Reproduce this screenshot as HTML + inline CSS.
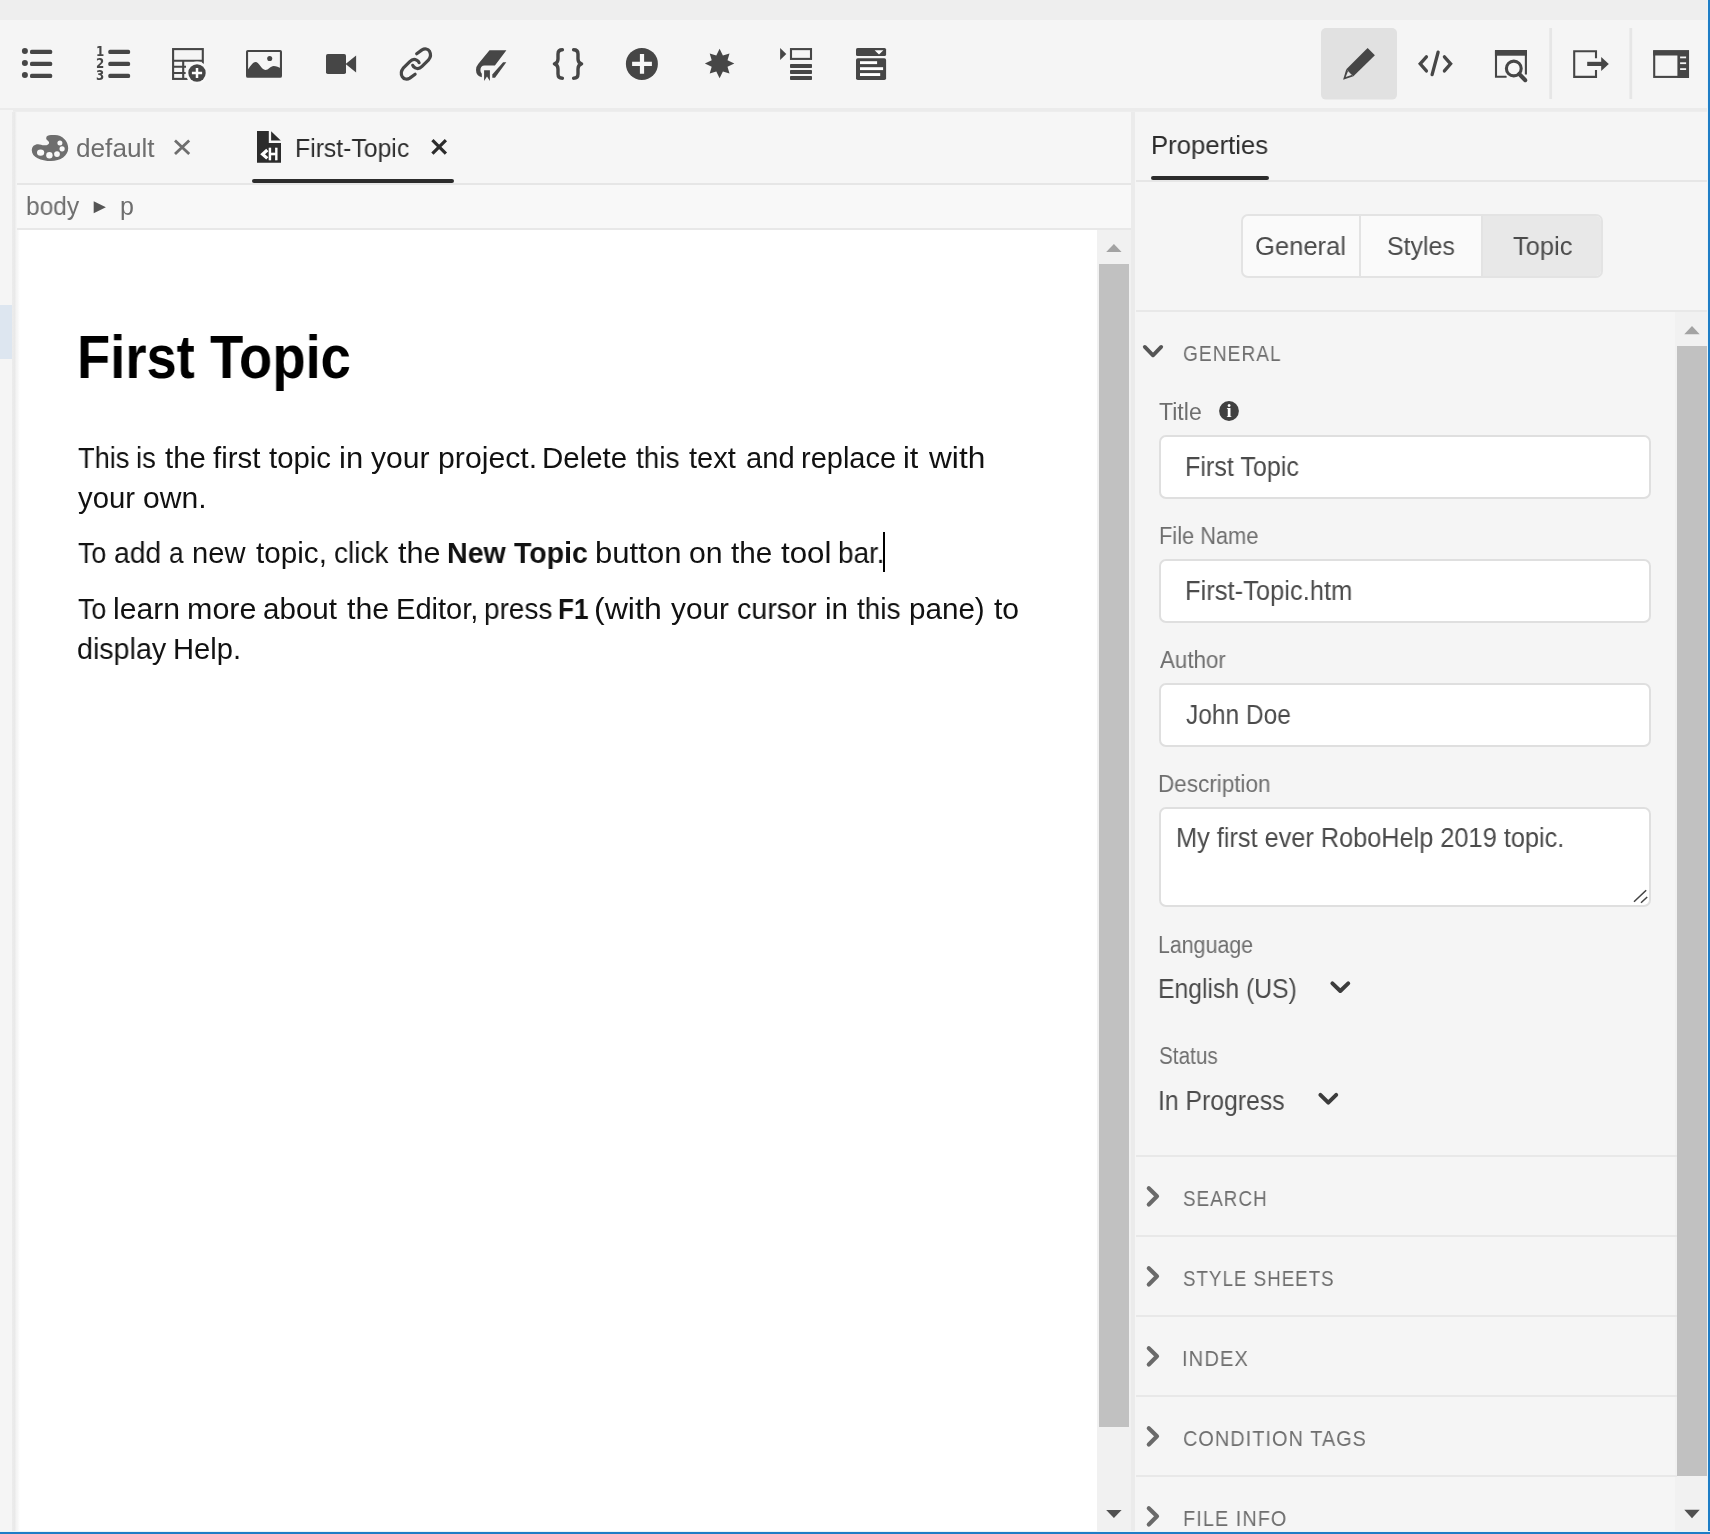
<!DOCTYPE html>
<html lang="en">
<head>
<meta charset="utf-8">
<title>First-Topic</title>
<style>
html,body{margin:0;padding:0;}
body{width:1710px;height:1534px;position:relative;overflow:hidden;background:#f5f5f5;font-family:"Liberation Sans",sans-serif;color:#2c2c2c;}
.abs{position:absolute;}
.t{position:absolute;white-space:pre;line-height:1;transform-origin:0 0;will-change:transform;}
svg{will-change:transform;}
#topstrip{left:0;top:0;width:1710px;height:20px;background:#eeeeee;}
#toolbar{left:0;top:20px;width:1710px;height:88px;background:#f5f5f5;}
#tbshadow{left:0;top:108px;width:1710px;height:7px;background:linear-gradient(#ebebeb,#ebebeb 40%,#f5f5f5);}
#gutter{left:0;top:110px;width:13px;height:1424px;background:#f5f5f5;}
#gutsel{left:0;top:305px;width:12px;height:54px;background:#dde6f0;}
#gutline{left:12px;top:112px;width:5px;height:1422px;background:linear-gradient(90deg,#ececec,#e9e9e9 50%,#f7f7f7);}
#edpanel{left:16px;top:112px;width:1116px;height:72px;background:#f6f6f6;}
#tabline{left:14px;top:183px;width:1118px;height:2px;background:#e6e6e6;}
#crumb{left:16px;top:185px;width:1116px;height:44px;background:#f8f8f8;}
#crumbline{left:14px;top:228px;width:1118px;height:2px;background:#e8e8e8;}
#page{left:17px;top:230px;width:1081px;height:1304px;background:linear-gradient(90deg,#f4f4f4,#fff 3px);}
#edscroll{left:1097px;top:230px;width:35px;height:1304px;background:#f1f1f1;}
#edthumb{left:1099px;top:264px;width:30px;height:1163px;background:#c1c1c1;}
#split{left:1131px;top:112px;width:4px;height:1422px;background:#ebebeb;}
#props{left:1135px;top:112px;width:572px;height:1422px;background:#f5f5f5;}
#pline1{left:1136px;top:180px;width:571px;height:2px;background:#e6e6e6;}
#pline2{left:1136px;top:310px;width:571px;height:2px;background:#e8e8e8;}
#ptrack{left:1675px;top:312px;width:32px;height:1222px;background:#f1f1f1;}
#pthumb{left:1677px;top:346px;width:30px;height:1130px;background:#c1c1c1;}
.ul{height:4px;border-radius:2px;background:#2c2c2c;}
#seg{left:1241px;top:214px;width:362px;height:64px;box-sizing:border-box;border:2px solid #e3e3e3;border-radius:7px;background:#fafafa;overflow:hidden;}
#segsel{left:1482px;top:216px;width:119px;height:60px;background:#e8e8e8;border-radius:0 5px 5px 0;}
.segdiv{top:216px;width:2px;height:60px;background:#e3e3e3;}
.inp{left:1159px;width:492px;box-sizing:border-box;border:2px solid #dfdfdf;border-radius:7px;background:#fff;}
.sep{left:1136px;width:541px;height:2px;background:#e8e8e8;}
#caret{left:883px;top:532px;width:2px;height:40px;background:#000;}
#blueR{left:1707px;top:0;width:3px;height:1534px;background:linear-gradient(90deg,#eaf4f7 1px,#1e7dc6 1px);}
#blueB{left:0;top:1531px;width:1710px;height:3px;background:linear-gradient(#eaf4f7 1px,#1e7dc6 1px);}
</style>
</head>
<body>

<div class="abs" id="topstrip"></div>
<div class="abs" id="toolbar"></div>
<div class="abs" id="tbshadow"></div>
<div class="abs" id="gutter"></div>
<div class="abs" id="gutsel"></div>
<div class="abs" id="edpanel"></div>
<div class="abs" id="crumb"></div>
<div class="abs" id="tabline"></div>
<div class="abs" id="crumbline"></div>
<div class="abs" id="page"></div>
<div class="abs" id="gutline"></div>
<div class="abs" id="edscroll"></div>
<div class="abs" id="edthumb"></div>
<div class="abs" id="props"></div>
<div class="abs" id="split"></div>
<div class="abs" id="pline1"></div>
<div class="abs" id="pline2"></div>
<div class="abs" id="ptrack"></div>
<div class="abs" id="pthumb"></div>
<div class="abs ul" style="left:252px;top:179px;width:202px"></div>
<div class="abs ul" style="left:1151px;top:176px;width:118px"></div>
<div class="abs" id="seg"></div>
<div class="abs" id="segsel"></div>
<div class="abs segdiv" style="left:1359px"></div>
<div class="abs segdiv" style="left:1481px"></div>
<div class="abs inp" style="top:435px;height:64px"></div>
<div class="abs inp" style="top:559px;height:64px"></div>
<div class="abs inp" style="top:683px;height:64px"></div>
<div class="abs inp" style="top:807px;height:100px"></div>
<div class="abs sep" style="top:1155px"></div>
<div class="abs sep" style="top:1235px"></div>
<div class="abs sep" style="top:1315px"></div>
<div class="abs sep" style="top:1395px"></div>
<div class="abs sep" style="top:1475px"></div>
<div class="abs" id="caret"></div>

<svg class="abs" style="left:0;top:0" width="1710" height="1534" viewBox="0 0 1710 1534" font-family="Liberation Sans, sans-serif">
<g fill="#464646" stroke="none">
<!-- bullet list -->
<circle cx="24.9" cy="51" r="3"/><circle cx="24.9" cy="63" r="3"/><circle cx="24.9" cy="75" r="3"/>
<rect x="30" y="49.8" width="22.2" height="4.3" rx="1.6"/><rect x="30" y="61.8" width="22.2" height="4.3" rx="1.6"/><rect x="30" y="73.8" width="22.2" height="4.3" rx="1.6"/>
<!-- numbered list -->
<text transform="translate(96.1 55.7) scale(.9 1)" font-size="13.2" style="font-family:'DejaVu Sans',sans-serif;font-weight:700">1</text>
<text transform="translate(96.1 67.7) scale(.9 1)" font-size="13.2" style="font-family:'DejaVu Sans',sans-serif;font-weight:700">2</text>
<text transform="translate(96.1 79.8) scale(.9 1)" font-size="13.2" style="font-family:'DejaVu Sans',sans-serif;font-weight:700">3</text>
<rect x="108.3" y="49.8" width="21.8" height="4.3" rx="1.6"/><rect x="108.3" y="61.8" width="21.8" height="4.3" rx="1.6"/><rect x="108.3" y="73.8" width="21.8" height="4.3" rx="1.6"/>
</g>
<!-- table + -->
<g fill="none" stroke="#464646" stroke-width="2.1">
<rect x="173.1" y="49.1" width="29.7" height="29.8"/>
<path d="M173 60.7H203 M183.2 60.7V79 M173 66.7H186 M173 73H186"/>
</g>
<circle cx="197" cy="73" r="11.4" fill="#f8f8f8"/>
<circle cx="197" cy="73" r="8.7" fill="#464646"/>
<path d="M191.9 73H202.1 M197 67.9V78.1" stroke="#fff" stroke-width="2.5" fill="none"/>
<!-- image -->
<rect x="247.05" y="50.95" width="33.9" height="25.8" rx=".8" fill="none" stroke="#464646" stroke-width="2.1"/>
<circle cx="269.7" cy="58.5" r="2.55" fill="#464646"/>
<path d="M247 70.8 C250 67 252.6 62.1 255.6 62.1 C259 62.1 261.6 70 265.4 70 C268.5 70 270.5 66 273.6 66 C276.5 66 278.5 67 281 68.3 V77 H247 Z" fill="#464646"/>
<!-- video -->
<rect x="326" y="54" width="20" height="20" rx="1.8" fill="#464646"/>
<path d="M345.6 64 L356.1 55.6 V72.4 Z" fill="#464646"/>
<!-- link -->
<g fill="none" stroke="#464646" stroke-width="3.2" stroke-linecap="round" stroke-linejoin="round">
<path d="M416.7 53.8 L422 49.9 C424.6 48.3 428 48.7 429.6 51.4 C431 54 430.5 57.4 428.6 59.8 L422 66.4 C420 68.4 417.2 68.9 415.2 67.9 C413.8 67.1 413 66.2 412.7 65.3"/>
<path transform="rotate(180 415.9 64)" d="M416.7 53.8 L422 49.9 C424.6 48.3 428 48.7 429.6 51.4 C431 54 430.5 57.4 428.6 59.8 L422 66.4 C420 68.4 417.2 68.9 415.2 67.9 C413.8 67.1 413 66.2 412.7 65.3"/>
</g>
<!-- glossary book -->
<path d="M489.5 50.2 H506.4 L494.9 65.6 H484.6 Q480.4 65.8 480.4 70.2 Q480.4 72.6 481.8 73.8 V77.2 Q476 75.6 476 69.9 Q476 66.6 478.4 63.8 Z" fill="#464646"/>
<path d="M484.1 70.2 H489.9 V80.9 L487 76.6 L484.1 80.9 Z" fill="#464646"/>
<path d="M492.3 77.7 H495 L506.3 62.2 H503.1 L492.3 74.5 Z" fill="#464646"/>
<!-- braces -->
<g fill="none" stroke="#464646" stroke-width="3.4" stroke-linecap="round" stroke-linejoin="round">
<path d="M562.4 49.8 Q558 49.8 558 54 V59 Q558 63 554.4 63.9 Q558 64.8 558 69 V74 Q558 78.2 562.4 78.2"/>
<path d="M573.6 49.8 Q578 49.8 578 54 V59 Q578 63 581.6 63.9 Q578 64.8 578 69 V74 Q578 78.2 573.6 78.2"/>
</g>
<!-- plus circle -->
<circle cx="641.9" cy="63.9" r="16" fill="#464646"/>
<path d="M632.1 63.9H651.9 M642 54V73.8" stroke="#f7f7f7" stroke-width="4.2" fill="none"/>
<!-- star -->
<path id="star8" fill="#464646" d="M719.6 48.8 L722.9 55.6 L729.5 53.6 L727.5 60.2 L734.3 63.5 L727.5 66.8 L729.5 73.4 L722.9 71.4 L719.6 78.2 L716.3 71.4 L709.7 73.4 L711.7 66.8 L704.9 63.5 L711.7 60.2 L709.7 53.6 L716.3 55.6 Z"/>
<!-- expanding text -->
<path d="M780.1 48.1 L786.3 54 L780.1 60 Z" fill="#464646"/>
<rect x="791" y="49.1" width="20" height="9.8" fill="none" stroke="#464646" stroke-width="2.1"/>
<g fill="#464646"><rect x="790" y="64.1" width="22" height="3.9" rx=".8"/><rect x="790" y="70.1" width="22" height="3.9" rx=".8"/><rect x="790" y="76.1" width="22" height="3.9" rx=".8"/></g>
<!-- dropdown -->
<rect x="856" y="48" width="30.1" height="8" rx="1.6" fill="#464646"/>
<path d="M874.6 50.2 H883.4 L879 54.4 Z" fill="#fff"/>
<rect x="856" y="58.2" width="30.1" height="21.8" rx="1.8" fill="#464646"/>
<g fill="#fff"><rect x="860" y="61.2" width="17.1" height="2.9"/><rect x="860" y="67.2" width="23.1" height="2.9"/><rect x="860" y="73.1" width="20.2" height="2.9"/></g>
<!-- RIGHT GROUP -->
<rect x="1321" y="28" width="76" height="71.6" rx="5" fill="#e1e1e1"/>
<!-- pencil -->
<path d="M1367.6 48 L1374.9 55.2 L1353.4 76.3 L1346.3 69.2 Z" fill="#464646"/>
<path d="M1346.3 69.2 L1343.1 79.7 L1353.4 76.3 Z" fill="#464646"/>
<path d="M1348 71.3 L1345.7 77.1 L1351.7 75.1 Z" fill="#e3e3e3"/>
<!-- code -->
<g fill="none" stroke="#464646" stroke-width="3.3" stroke-linecap="round" stroke-linejoin="miter">
<path d="M1426.4 56.8 L1420.2 63.8 L1426.4 70.9"/>
<path d="M1438.1 52.2 L1432.1 74.6"/>
<path d="M1444.4 56.8 L1450.6 63.8 L1444.4 70.9"/>
</g>
<!-- preview -->
<path d="M1496 51 H1525.9 V74.6 M1506.6 76.8 H1496 V51" fill="none" stroke="#464646" stroke-width="2.1"/>
<rect x="1494.95" y="50" width="32" height="5.7" fill="#464646"/>
<circle cx="1513.8" cy="68.5" r="10.3" fill="#f6f6f6"/>
<path d="M1517 71.7 L1527.6 82.6" stroke="#f6f6f6" stroke-width="6.4" fill="none"/>
<circle cx="1513.8" cy="68.5" r="7.4" fill="none" stroke="#464646" stroke-width="3.1"/>
<path d="M1519.2 74 L1525.3 80.2" stroke="#464646" stroke-width="4.1" stroke-linecap="round" fill="none"/>
<!-- dividers -->
<rect x="1549.3" y="28" width="2.8" height="71" fill="#e6e6e6"/>
<rect x="1629.4" y="28" width="2.8" height="71" fill="#e6e6e6"/>
<!-- export -->
<path d="M1596 58.2 V51.3 H1574.2 V76.9 H1596 V70" fill="none" stroke="#464646" stroke-width="2.1"/>
<rect x="1587.2" y="61.8" width="15" height="4.2" fill="#464646"/>
<path d="M1601.2 57 L1608.8 63.9 L1601.2 71 Z" fill="#464646"/>
<!-- side panel -->
<rect x="1654.2" y="51.3" width="33.8" height="25.6" fill="none" stroke="#464646" stroke-width="2.1"/>
<rect x="1653.2" y="50.3" width="35.8" height="5.2" fill="#464646"/>
<rect x="1677.4" y="51" width="11.6" height="26.9" fill="#464646"/>
<g fill="#f5f5f5"><rect x="1680.1" y="56.5" width="6" height="1.8"/><rect x="1680.1" y="62.3" width="6" height="1.8"/><rect x="1680.1" y="68.2" width="6" height="1.8"/></g>
</svg>

<svg class="abs" style="left:0;top:0" width="1710" height="1534" viewBox="0 0 1710 1534" font-family="Liberation Sans, sans-serif">
<!-- palette -->
<path fill="#6e6e6e" d="M46.2 138 C46.4 135.9 48.4 135.1 51 135.1 L55 135.1 C62.2 135.3 68.2 141 68.2 148.2 C68.2 155.6 60.5 161 51 161 C41 161 31.8 157 31.8 150.4 C31.8 146.4 34.5 144.2 38 144.2 C40.5 144.2 42 145.4 44.5 145.3 C47.5 145.2 49.4 144 49.1 142.4 C48.6 140.6 46 140.2 46.2 138 Z"/>
<g fill="#f8f8f8"><circle cx="59.9" cy="143" r="2.5"/><circle cx="62.1" cy="148.8" r="2.6"/><circle cx="57" cy="154.1" r="2.9"/><circle cx="49.4" cy="155.2" r="3.2"/><ellipse cx="40.6" cy="152.6" rx="3.6" ry="3.2"/></g>
<!-- close default -->
<path d="M175 140.4 L189.2 154 M189.2 140.4 L175 154" stroke="#6e6e6e" stroke-width="2.8" fill="none"/>
<!-- file icon -->
<path fill="#2c2c2c" d="M257 131 H268.8 V143.1 H281 V162.7 H257 Z"/>
<path fill="#2c2c2c" d="M271.1 131.2 L280.8 140.6 H271.1 Z"/>
<path d="M267.3 150 L262.6 154.2 L267.3 158.4" fill="none" stroke="#fff" stroke-width="3.2" stroke-linejoin="miter"/>
<text transform="translate(268 159.9) scale(0.85 1)" font-size="16.6" style="font-family:'Liberation Sans',sans-serif;font-weight:700" fill="#fff" stroke="#fff" stroke-width=".3">H</text>
<!-- close first-topic -->
<path d="M432.4 140.1 L445.9 153.7 M445.9 140.1 L432.4 153.7" stroke="#2c2c2c" stroke-width="3.2" fill="none"/>
<!-- breadcrumb arrow -->
<path d="M93.7 201.3 L105.9 207.3 L93.7 213.2 Z" fill="#555"/>
<!-- editor scroll arrows -->
<path d="M1106.2 252 L1113.9 244 L1121.6 252 Z" fill="#a3a3a3"/>
<path d="M1106.2 1510 H1121.6 L1113.9 1518 Z" fill="#505050"/>
<!-- props scroll arrows -->
<path d="M1684.3 334.3 L1692 326 L1699.7 334.3 Z" fill="#a3a3a3"/>
<path d="M1684.3 1509.8 H1699.7 L1692 1518.2 Z" fill="#505050"/>
<!-- GENERAL chevron down -->
<path d="M1144.8 346.9 L1153 355.3 L1161.2 346.9" fill="none" stroke="#555" stroke-width="3.8" stroke-linecap="round" stroke-linejoin="round"/>
<!-- info icon -->
<circle cx="1229" cy="411" r="9.9" fill="#404040"/>
<text x="1226.4" y="417.1" font-size="18.4" style="font-family:'Liberation Serif',serif;font-weight:700" fill="#fff">i</text>
<!-- resize grip -->
<path d="M1634 901.8 L1646.2 890.2 M1641 902.7 L1647.2 897" stroke="#444" stroke-width="1.5" fill="none"/>
<!-- select chevrons -->
<path d="M1332.4 983.4 L1340.3 991 L1348.2 983.4" fill="none" stroke="#3c3c3c" stroke-width="4" stroke-linecap="round" stroke-linejoin="round"/>
<path d="M1320.4 1094.8 L1328.3 1102.6 L1336.2 1094.8" fill="none" stroke="#3c3c3c" stroke-width="4" stroke-linecap="round" stroke-linejoin="round"/>
<!-- section chevrons right -->
<g fill="none" stroke="#6a6a6a" stroke-width="4.2" stroke-linecap="round" stroke-linejoin="round">
<path d="M1148.8 1188.2 L1157 1196.3 L1148.8 1204.4"/>
<path d="M1148.8 1268.2 L1157 1276.3 L1148.8 1284.4"/>
<path d="M1148.8 1348.2 L1157 1356.3 L1148.8 1364.4"/>
<path d="M1148.8 1428.2 L1157 1436.3 L1148.8 1444.4"/>
<path d="M1148.8 1508.2 L1157 1516.3 L1148.8 1524.4"/>
</g>
</svg>

<div class="t" id="tdef" style="left:75.89px;top:135px;font-size:26px;color:#6e6e6e;transform:scaleX(1.0065)">default</div>
<div class="t" id="tft" style="left:294.99px;top:135px;font-size:26px;color:#2c2c2c;transform:scaleX(0.9525)">First-Topic</div>
<div class="t" id="cbody" style="left:25.92px;top:194px;font-size:25px;color:#6e6e6e;transform:scaleX(0.9792)">body</div>
<div class="t" id="cp" style="left:120.43px;top:194px;font-size:25px;color:#6e6e6e;transform:scaleX(0.9667)">p</div>
<h1 style="margin:0;font:inherit"><span class="t" id="h1" style="left:76.64px;top:327px;font-size:61px;color:#000;transform:scaleX(0.8911)"><b>First Topic</b></span></h1>
<p style="margin:0"><span class="t" id="p1_0" style="left:77.50px;top:444px;font-size:29px;color:#111;transform:scaleX(0.9389)">This</span> <span class="t" id="p1_1" style="left:136.11px;top:444px;font-size:29px;color:#111;transform:scaleX(0.9444)">is</span> <span class="t" id="p1_2" style="left:164.80px;top:444px;font-size:29px;color:#111;transform:scaleX(1.0103)">the</span> <span class="t" id="p1_3" style="left:213.20px;top:444px;font-size:29px;color:#111;transform:scaleX(1.0149)">first</span> <span class="t" id="p1_4" style="left:269.20px;top:444px;font-size:29px;color:#111;transform:scaleX(1.0131)">topic</span> <span class="t" id="p1_5" style="left:339.26px;top:444px;font-size:29px;color:#111;transform:scaleX(1.0684)">in</span> <span class="t" id="p1_6" style="left:371.20px;top:444px;font-size:29px;color:#111;transform:scaleX(1.0393)">your</span> <span class="t" id="p1_7" style="left:437.71px;top:444px;font-size:29px;color:#111;transform:scaleX(1.0429)">project.</span> <span class="t" id="p1_8" style="left:542.47px;top:444px;font-size:29px;color:#111;transform:scaleX(1.0160)">Delete</span> <span class="t" id="p1_9" style="left:636.30px;top:444px;font-size:29px;color:#111;transform:scaleX(0.9622)">this</span> <span class="t" id="p1_10" style="left:689.40px;top:444px;font-size:29px;color:#111;transform:scaleX(0.9957)">text</span> <span class="t" id="p1_11" style="left:745.70px;top:444px;font-size:29px;color:#111;transform:scaleX(1.0043)">and</span> <span class="t" id="p1_12" style="left:801.30px;top:444px;font-size:29px;color:#111;transform:scaleX(0.9989)">replace</span> <span class="t" id="p1_13" style="left:903.19px;top:444px;font-size:29px;color:#111;transform:scaleX(1.0538)">it</span> <span class="t" id="p1_14" style="left:929.20px;top:444px;font-size:29px;color:#111;transform:scaleX(1.0920)">with</span> <span class="t" id="p1_15" style="left:77.50px;top:484px;font-size:29px;color:#111;transform:scaleX(1.0107)">your</span> <span class="t" id="p1_16" style="left:142.96px;top:484px;font-size:29px;color:#111;transform:scaleX(1.0379)">own.</span></p>
<p style="margin:0"><span class="t" id="p2_17" style="left:77.50px;top:539px;font-size:29px;color:#111;transform:scaleX(0.9233)">To</span> <span class="t" id="p2_18" style="left:113.73px;top:539px;font-size:29px;color:#111;transform:scaleX(0.9739)">add</span> <span class="t" id="p2_19" style="left:168.95px;top:539px;font-size:29px;color:#111;transform:scaleX(0.9000)">a</span> <span class="t" id="p2_20" style="left:191.79px;top:539px;font-size:29px;color:#111;transform:scaleX(1.0038)">new</span> <span class="t" id="p2_21" style="left:256.40px;top:539px;font-size:29px;color:#111;transform:scaleX(1.0239)">topic,</span> <span class="t" id="p2_22" style="left:333.54px;top:539px;font-size:29px;color:#111;transform:scaleX(0.9643)">click</span> <span class="t" id="p2_23" style="left:398.00px;top:539px;font-size:29px;color:#111;transform:scaleX(1.0564)">the</span> <span class="t" id="p2_24" style="left:446.83px;top:539px;font-size:29px;color:#111;transform:scaleX(0.9862)"><b>New</b></span> <span class="t" id="p2_25" style="left:514.40px;top:539px;font-size:29px;color:#111;transform:scaleX(0.9824)"><b>Topic</b></span> <span class="t" id="p2_26" style="left:594.85px;top:539px;font-size:29px;color:#111;transform:scaleX(1.0727)">button</span> <span class="t" id="p2_27" style="left:688.96px;top:539px;font-size:29px;color:#111;transform:scaleX(1.0433)">on</span> <span class="t" id="p2_28" style="left:731.20px;top:539px;font-size:29px;color:#111;transform:scaleX(1.0231)">the</span> <span class="t" id="p2_29" style="left:781.00px;top:539px;font-size:29px;color:#111;transform:scaleX(1.0800)">tool</span> <span class="t" id="p2_30" style="left:838.38px;top:539px;font-size:29px;color:#111;transform:scaleX(0.9614)">bar.</span></p>
<p style="margin:0"><span class="t" id="p3_31" style="left:77.50px;top:595px;font-size:29px;color:#111;transform:scaleX(0.9233)">To</span> <span class="t" id="p3_32" style="left:112.62px;top:595px;font-size:29px;color:#111;transform:scaleX(1.0377)">learn</span> <span class="t" id="p3_33" style="left:186.60px;top:595px;font-size:29px;color:#111;transform:scaleX(1.0508)">more</span> <span class="t" id="p3_34" style="left:263.38px;top:595px;font-size:29px;color:#111;transform:scaleX(1.0194)">about</span> <span class="t" id="p3_35" style="left:346.80px;top:595px;font-size:29px;color:#111;transform:scaleX(1.0462)">the</span> <span class="t" id="p3_36" style="left:395.99px;top:595px;font-size:29px;color:#111;transform:scaleX(1.0026)">Editor,</span> <span class="t" id="p3_37" style="left:484.07px;top:595px;font-size:29px;color:#111;transform:scaleX(0.9632)">press</span> <span class="t" id="p3_38" style="left:558.00px;top:595px;font-size:29px;color:#111;transform:scaleX(0.9000)"><b>F1</b></span> <span class="t" id="p3_39" style="left:593.79px;top:595px;font-size:29px;color:#111;transform:scaleX(1.1069)">(with</span> <span class="t" id="p3_40" style="left:670.60px;top:595px;font-size:29px;color:#111;transform:scaleX(1.0286)">your</span> <span class="t" id="p3_41" style="left:736.71px;top:595px;font-size:29px;color:#111;transform:scaleX(0.9875)">cursor</span> <span class="t" id="p3_42" style="left:825.16px;top:595px;font-size:29px;color:#111;transform:scaleX(1.0211)">in</span> <span class="t" id="p3_43" style="left:857.00px;top:595px;font-size:29px;color:#111;transform:scaleX(0.9622)">this</span> <span class="t" id="p3_44" style="left:909.26px;top:595px;font-size:29px;color:#111;transform:scaleX(1.0211)">pane)</span> <span class="t" id="p3_45" style="left:993.60px;top:595px;font-size:29px;color:#111;transform:scaleX(1.0391)">to</span> <span class="t" id="p3_46" style="left:76.51px;top:635px;font-size:29px;color:#111;transform:scaleX(0.9876)">display</span> <span class="t" id="p3_47" style="left:172.99px;top:635px;font-size:29px;color:#111;transform:scaleX(1.0063)">Help.</span></p>
<div class="t" id="tprops" style="left:1150.62px;top:132px;font-size:26px;color:#2c2c2c;transform:scaleX(0.9879)">Properties</div>
<div class="t" id="sgen" style="left:1255.22px;top:233px;font-size:26px;color:#4b4b4b;transform:scaleX(0.9833)">General</div>
<div class="t" id="ssty" style="left:1386.84px;top:233px;font-size:26px;color:#4b4b4b;transform:scaleX(0.9594)">Styles</div>
<div class="t" id="stop" style="left:1513.30px;top:233px;font-size:26px;color:#4b4b4b;transform:scaleX(0.9783)">Topic</div>
<div class="t" id="hgen" style="left:1182.73px;top:343px;font-size:22px;color:#6e6e6e;transform:scaleX(0.8694)"><span style='letter-spacing:1.2px'>GENERAL</span></div>
<div class="t" id="ltitle" style="left:1158.70px;top:401px;font-size:23px;color:#6e6e6e;transform:scaleX(1.0024)">Title</div>
<div class="t" id="v1" style="left:1185.14px;top:454px;font-size:27px;color:#4b4b4b;transform:scaleX(0.9300)">First Topic</div>
<div class="t" id="lfile" style="left:1158.50px;top:525px;font-size:23px;color:#6e6e6e;transform:scaleX(0.9490)">File Name</div>
<div class="t" id="v2" style="left:1185.11px;top:578px;font-size:27px;color:#4b4b4b;transform:scaleX(0.9454)">First-Topic.htm</div>
<div class="t" id="lauth" style="left:1159.90px;top:649px;font-size:23px;color:#6e6e6e;transform:scaleX(0.9721)">Author</div>
<div class="t" id="v3" style="left:1186.00px;top:702px;font-size:27px;color:#4b4b4b;transform:scaleX(0.9078)">John Doe</div>
<div class="t" id="ldesc" style="left:1157.94px;top:773px;font-size:23px;color:#6e6e6e;transform:scaleX(0.9777)">Description</div>
<div class="t" id="v4" style="left:1176.33px;top:825px;font-size:27px;color:#4b4b4b;transform:scaleX(0.9373)">My first ever RoboHelp 2019 topic.</div>
<div class="t" id="llang" style="left:1158.04px;top:934px;font-size:23px;color:#6e6e6e;transform:scaleX(0.9290)">Language</div>
<div class="t" id="v5" style="left:1158.07px;top:976px;font-size:27px;color:#4b4b4b;transform:scaleX(0.9162)">English (US)</div>
<div class="t" id="lstat" style="left:1159.00px;top:1045px;font-size:23px;color:#6e6e6e;transform:scaleX(0.9000)">Status</div>
<div class="t" id="v6" style="left:1158.07px;top:1088px;font-size:27px;color:#4b4b4b;transform:scaleX(0.9170)">In Progress</div>
<div class="t" id="h2" style="left:1182.74px;top:1188px;font-size:22px;color:#6e6e6e;transform:scaleX(0.8568)"><span style='letter-spacing:1.2px'>SEARCH</span></div>
<div class="t" id="h3" style="left:1182.75px;top:1268px;font-size:22px;color:#6e6e6e;transform:scaleX(0.8509)"><span style='letter-spacing:1.2px'>STYLE SHEETS</span></div>
<div class="t" id="h4" style="left:1181.77px;top:1348px;font-size:22px;color:#6e6e6e;transform:scaleX(0.9157)"><span style='letter-spacing:1.2px'>INDEX</span></div>
<div class="t" id="h5" style="left:1182.70px;top:1428px;font-size:22px;color:#6e6e6e;transform:scaleX(0.9010)"><span style='letter-spacing:1.2px'>CONDITION TAGS</span></div>
<div class="t" id="h6" style="left:1182.70px;top:1508px;font-size:22px;color:#6e6e6e;transform:scaleX(0.9009)"><span style='letter-spacing:1.2px'>FILE INFO</span></div>
<div class="abs" id="blueR"></div>
<div class="abs" id="blueB"></div>
</body>
</html>
